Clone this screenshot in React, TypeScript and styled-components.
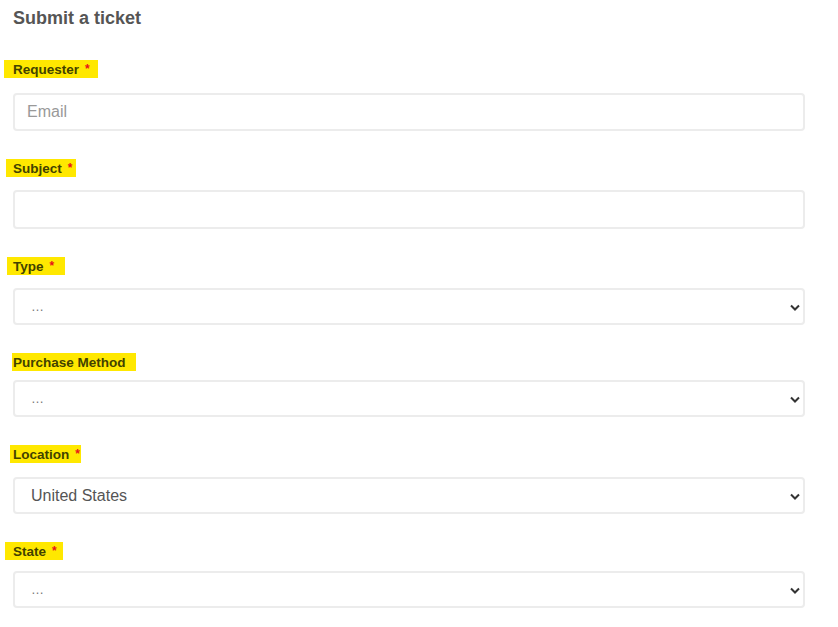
import React from "react";
import styled, { createGlobalStyle } from "styled-components";

const GlobalStyle = createGlobalStyle`
  body {
    margin: 0;
    background: #ffffff;
    font-family: "Liberation Sans", Arial, sans-serif;
  }
`;

const Page = styled.div`
  display: flex;
  flex-direction: column;
  padding: 8px 33px 0 13px;
`;

const Title = styled.h1`
  margin: 0 0 32px 0;
  font-size: 18px;
  line-height: 20px;
  font-weight: bold;
  color: #555555;
`;

const Form = styled.form`
  display: flex;
  flex-direction: column;
  gap: 28px;
`;

const Field = styled.div`
  display: flex;
  flex-direction: column;
  align-items: flex-start;
`;

const Label = styled.label<{ $pl: number; $pr: number; $mb: number }>`
  display: inline-flex;
  align-items: center;
  height: 18px;
  margin: 0 0 ${(p) => p.$mb}px ${(p) => -p.$pl}px;
  padding: 0 ${(p) => p.$pr}px 0 ${(p) => p.$pl}px;
  background: #ffe800;
  font-size: 13.5px;
  font-weight: bold;
  color: #424200;
`;

const Required = styled.span`
  margin-left: 6px;
  font-size: 12px;
  color: #e8101a;
`;

const TextInput = styled.input<{ $h: number }>`
  box-sizing: border-box;
  width: 100%;
  height: ${(p) => p.$h}px;
  padding: 0 12px;
  border: 2px solid #ececec;
  border-radius: 4px;
  font-family: "Liberation Sans", Arial, sans-serif;
  font-size: 16px;
  color: #555555;
  outline: none;

  &::placeholder {
    color: #999999;
  }
`;

const SelectWrap = styled.div`
  position: relative;
  width: 100%;
`;

const Select = styled.select<{ $empty?: boolean }>`
  box-sizing: border-box;
  display: block;
  width: 100%;
  height: 37px;
  padding: 0 30px 0 16px;
  border: 2px solid #ececec;
  border-radius: 4px;
  background: #ffffff;
  appearance: none;
  font-family: "Liberation Sans", Arial, sans-serif;
  font-size: ${(p) => (p.$empty ? "13px" : "16px")};
  color: ${(p) => (p.$empty ? "#777777" : "#555555")};
  outline: none;
`;

const Chevron = styled.svg`
  position: absolute;
  right: 5px;
  top: 50%;
  width: 10px;
  height: 7px;
  margin-top: -3px;
  pointer-events: none;
`;

type FieldDef = {
  label: string;
  required: boolean;
  pl: number;
  pr: number;
  mb: number;
  kind: "input" | "select";
  placeholder?: string;
  value?: string;
  h?: number;
};

const fields: FieldDef[] = [
  { label: "Requester", required: true, pl: 9, pr: 8, mb: 15, kind: "input", placeholder: "Email", h: 38 },
  { label: "Subject", required: true, pl: 7, pr: 4, mb: 13, kind: "input", h: 39 },
  { label: "Type", required: true, pl: 6, pr: 11, mb: 13, kind: "select" },
  { label: "Purchase Method", required: false, pl: 1, pr: 10, mb: 9, kind: "select" },
  { label: "Location", required: true, pl: 3, pr: 1, mb: 14, kind: "select", value: "United States" },
  { label: "State", required: true, pl: 8, pr: 6, mb: 11, kind: "select" },
];

export default function App() {
  return (
    <>
      <GlobalStyle />
      <Page>
        <Title>Submit a ticket</Title>
        <Form>
          {fields.map((f) => (
            <Field key={f.label}>
              <Label $pl={f.pl} $pr={f.pr} $mb={f.mb}>
                {f.label}
                {f.required && <Required>*</Required>}
              </Label>
              {f.kind === "input" ? (
                <TextInput $h={f.h || 38} placeholder={f.placeholder} />
              ) : (
                <SelectWrap>
                  <Select $empty={!f.value} defaultValue={f.value || ""}>
                    <option value="">…</option>
                    {f.value && <option value={f.value}>{f.value}</option>}
                  </Select>
                  <Chevron viewBox="0 0 10 7">
                    <path d="M1 1.5 L5 5.5 L9 1.5" fill="none" stroke="#333" strokeWidth="2" />
                  </Chevron>
                </SelectWrap>
              )}
            </Field>
          ))}
        </Form>
      </Page>
    </>
  );
}
